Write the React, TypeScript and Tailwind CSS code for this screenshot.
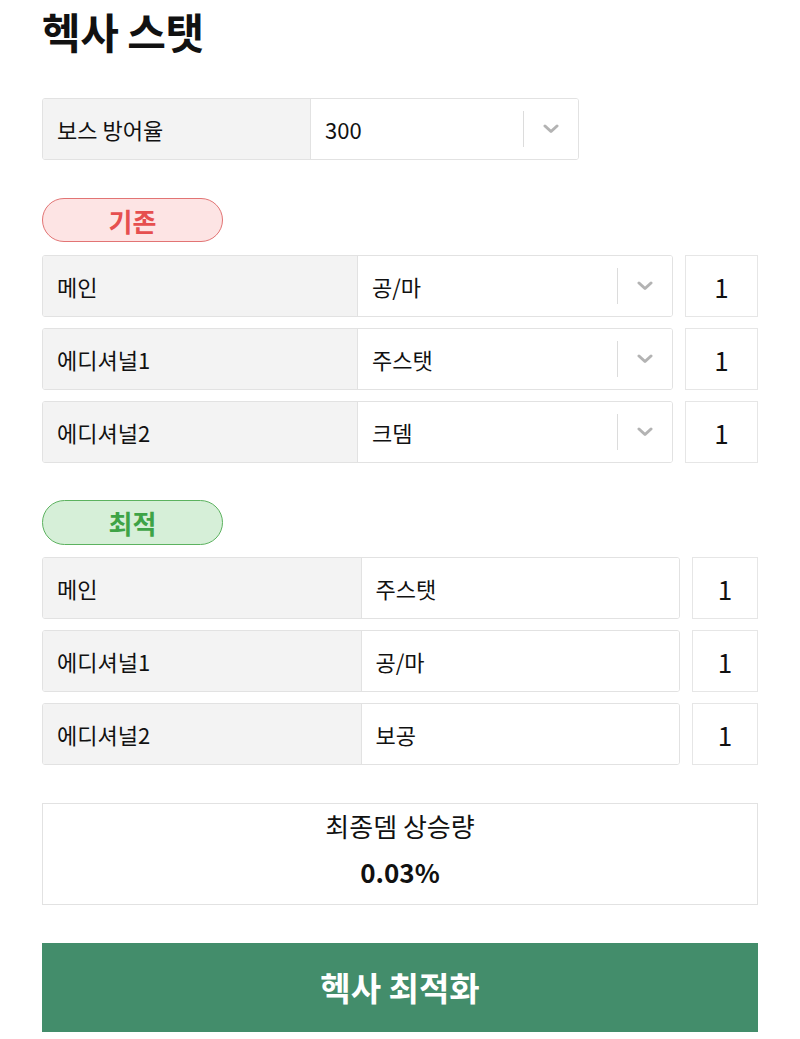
import React from "react";

const font = { fontFamily: '"Noto Sans CJK KR", "Noto Sans", sans-serif' };

function Chevron() {
  return (
    <svg width="16" height="10" viewBox="0 0 16 10" className="block">
      <path d="M2 2 L8 7.5 L14 2" fill="none" stroke="#b3b3b3" strokeWidth="3" strokeLinecap="round" strokeLinejoin="round" />
    </svg>
  );
}

function SelectCell({ value }: { value: string }) {
  return (
    <div className="flex-1 flex items-center bg-white pl-[14px]">
      <span className="flex-1 text-[22px] text-[#111]">{value}</span>
      <div className="w-px h-[36px] bg-[#dcdcdc]" />
      <div className="w-[54px] flex justify-center">
        <Chevron />
      </div>
    </div>
  );
}

function Row({ label, value, select, num, boxW }: { label: string; value: string; select: boolean; num: string; boxW: string }) {
  return (
    <div className="flex h-[62px] gap-[12px]">
      <div className="flex-1 flex border border-[#e2e2e2] rounded-[3px] overflow-hidden">
        <div className="flex-1 bg-[#f3f3f3] flex items-center pl-[14px] border-r border-[#e2e2e2] text-[22px] text-[#111]">{label}</div>
        {select ? (
          <SelectCell value={value} />
        ) : (
          <div className="flex-1 flex items-center bg-white pl-[14px] text-[22px] text-[#111]">{value}</div>
        )}
      </div>
      <div className={`${boxW} border border-[#e6e6e6] flex items-center justify-center text-[26px] text-[#111]`}>{num}</div>
    </div>
  );
}

export default function App() {
  return (
    <div className="min-h-[1039px] bg-white px-[42px] pt-[2px]" style={font}>
      <h1 className="text-[42px] font-bold text-[#111] leading-[58px] tracking-[-0.5px]">헥사 스탯</h1>

      <div className="mt-[38px] w-[537px] h-[62px] flex border border-[#e2e2e2] rounded-[3px] overflow-hidden">
        <div className="flex-1 bg-[#f3f3f3] flex items-center pl-[14px] border-r border-[#e2e2e2] text-[22px] text-[#111]">보스 방어율</div>
        <SelectCell value="300" />
      </div>

      <div className="mt-[38px] w-[181px] h-[44px] rounded-full border-[1.5px] border-[#e27474] bg-[#fde4e4] flex items-center justify-center text-[26px] font-bold text-[#e64f4f]">
        기존
      </div>

      <div className="mt-[13px] flex flex-col gap-[11px]">
        <Row label="메인" value="공/마" select num="1" boxW="w-[73px]" />
        <Row label="에디셔널1" value="주스탯" select num="1" boxW="w-[73px]" />
        <Row label="에디셔널2" value="크뎀" select num="1" boxW="w-[73px]" />
      </div>

      <div className="mt-[37px] w-[181px] h-[45px] rounded-full border-[1.5px] border-[#5cb25f] bg-[#d6efd8] flex items-center justify-center text-[26px] font-bold text-[#3ea346]">
        최적
      </div>

      <div className="mt-[12px] flex flex-col gap-[11px]">
        <Row label="메인" value="주스탯" select={false} num="1" boxW="w-[66px]" />
        <Row label="에디셔널1" value="공/마" select={false} num="1" boxW="w-[66px]" />
        <Row label="에디셔널2" value="보공" select={false} num="1" boxW="w-[66px]" />
      </div>

      <div className="mt-[38px] h-[102px] border border-[#e2e2e2] flex flex-col items-center pt-[2px]">
        <div className="text-[26px] text-[#111] leading-[40px]">최종뎀 상승량</div>
        <div className="text-[26px] font-bold text-[#111] leading-[40px] mt-[6px]">0.03%</div>
      </div>

      <button className="mt-[38px] w-full h-[89px] bg-[#438d6b] text-white text-[33px] font-bold flex items-center justify-center">
        헥사 최적화
      </button>
    </div>
  );
}
